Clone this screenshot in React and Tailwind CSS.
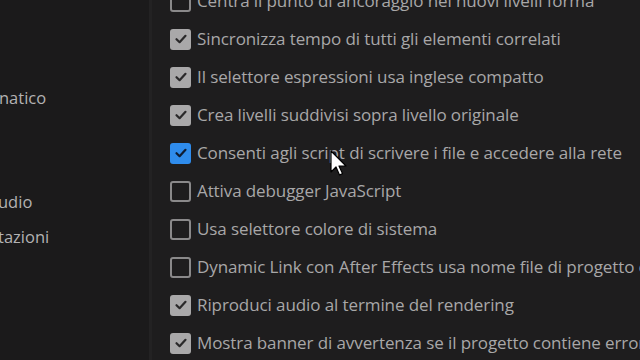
import React from 'react';

const options = [
  { label: 'Centra il punto di ancoraggio nei nuovi livelli forma', state: 'off' },
  { label: 'Sincronizza tempo di tutti gli elementi correlati', state: 'on' },
  { label: 'Il selettore espressioni usa inglese compatto', state: 'on' },
  { label: 'Crea livelli suddivisi sopra livello originale', state: 'on' },
  { label: 'Consenti agli script di scrivere i file e accedere alla rete', state: 'active' },
  { label: 'Attiva debugger JavaScript', state: 'off' },
  { label: 'Usa selettore colore di sistema', state: 'off' },
  { label: 'Dynamic Link con After Effects usa nome file di progetto con numeri', state: 'off' },
  { label: 'Riproduci audio al termine del rendering', state: 'on' },
  { label: 'Mostra banner di avvertenza se il progetto contiene errori', state: 'on' },
];

function Check({ state }) {
  if (state === 'off') {
    return <div className="w-[21px] h-[21px] rounded-[3px] border-2 border-[#8a898a] shrink-0" />;
  }
  const blue = state === 'active';
  return (
    <div className={`w-[21px] h-[21px] rounded-[3px] shrink-0 flex items-center justify-center ${blue ? 'bg-[#2f8cec]' : 'bg-[#a9a8a9]'}`}>
      <svg width="14" height="14" viewBox="0 0 14 14" fill="none">
        <path d="M2.5 7.2 L5.6 10.2 L11.5 3.8" stroke={blue ? '#0f1d33' : '#2a292a'} strokeWidth="2.2" strokeLinecap="round" strokeLinejoin="round" />
      </svg>
    </div>
  );
}

export default function App() {
  return (
    <div className="relative w-[640px] h-[360px] overflow-hidden flex bg-[#1e1d1e] font-['Open_Sans',sans-serif]">
      {/* sidebar */}
      <div className="w-[149px] shrink-0 bg-[#1b1a1b] text-[#b3b2b3] text-[16.5px] leading-[20px]">
        <div className="mt-[88px] -ml-[1px]">natico</div>
        <div className="mt-[84px] -ml-[2px]">udio</div>
        <div className="mt-[15px] -ml-[2px]">tazioni</div>
      </div>
      <div className="w-[3px] shrink-0 bg-[#232223]" />

      {/* options */}
      <div className="flex-1 pl-[18px] -mt-[18px] flex flex-col">
        {options.map((o) => (
          <div key={o.label} className="h-[38px] shrink-0 flex items-center gap-[6px] whitespace-nowrap">
            <Check state={o.state} />
            <span className="text-[17px] text-[#a8a7a8] tracking-[-0.1px]">{o.label}</span>
          </div>
        ))}
      </div>

      {/* cursor */}
      <svg className="absolute left-[330px] top-[150px]" width="20" height="28" viewBox="0 0 20 28">
        <path d="M1 1 L1 22 L6 17 L9.5 25 L12.5 23.6 L9 16 L16 16 Z" fill="#ffffff" stroke="#000000" strokeWidth="1.2" strokeLinejoin="round" />
      </svg>
    </div>
  );
}
